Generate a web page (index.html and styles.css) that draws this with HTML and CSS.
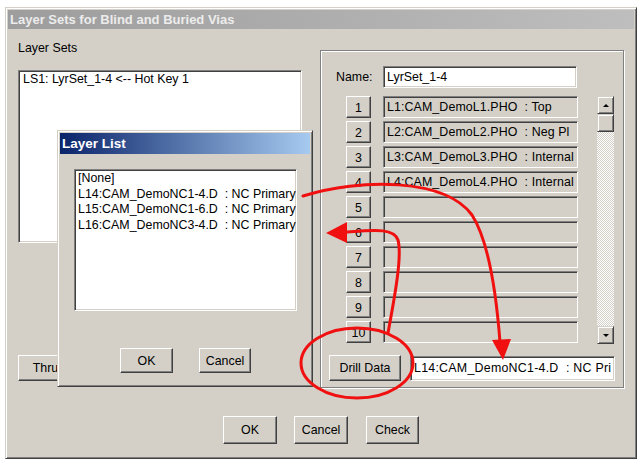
FILE: index.html
```html
<!DOCTYPE html>
<html lang="en">
<head>
    <meta charset="UTF-8">
    <title>Layer Sets for Blind and Buried Vias</title>
    <link rel="stylesheet" href="styles.css">
</head>
<body>
    <div class="window">
        <div class="titlebar">Layer Sets for Blind and Buried Vias</div>
        <div class="main">
            <div class="left-col">
                <div class="label">Layer Sets</div>
                <div class="listbox sets-list">
                    <div class="item">LS1: LyrSet_1-4 &lt;-- Hot Key 1</div>
                </div>
                <button class="btn thru-btn">Thru Holes</button>
            </div>
            <div class="groupbox">
                <div class="name-row">
                    <span class="name-label">Name:</span>
                    <div class="field white name-field">LyrSet_1-4</div>
                </div>
                <div class="layers">
                    <div class="rows">
                        <div class="row"><button class="btn num-btn">1</button><div class="field">L1:CAM_DemoL1.PHO  : Top</div></div>
                        <div class="row"><button class="btn num-btn">2</button><div class="field">L2:CAM_DemoL2.PHO  : Neg Pl</div></div>
                        <div class="row"><button class="btn num-btn">3</button><div class="field">L3:CAM_DemoL3.PHO  : Internal</div></div>
                        <div class="row"><button class="btn num-btn">4</button><div class="field">L4:CAM_DemoL4.PHO  : Internal</div></div>
                        <div class="row"><button class="btn num-btn">5</button><div class="field"></div></div>
                        <div class="row"><button class="btn num-btn">6</button><div class="field"></div></div>
                        <div class="row"><button class="btn num-btn">7</button><div class="field"></div></div>
                        <div class="row"><button class="btn num-btn">8</button><div class="field"></div></div>
                        <div class="row"><button class="btn num-btn">9</button><div class="field"></div></div>
                        <div class="row"><button class="btn num-btn">10</button><div class="field"></div></div>
                    </div>
                    <div class="scrollbar">
                        <div class="sb-btn"><span class="arrow up"></span></div>
                        <div class="sb-thumb"></div>
                        <div class="sb-track"></div>
                        <div class="sb-btn"><span class="arrow down"></span></div>
                    </div>
                </div>
                <div class="drill-row">
                    <button class="btn drill-btn">Drill Data</button>
                    <div class="field white drill-field">L14:CAM_DemoNC1-4.D  : NC Pri</div>
                </div>
            </div>
        </div>
        <div class="footer">
            <button class="btn ok-btn">OK</button>
            <button class="btn cancel-btn">Cancel</button>
            <button class="btn check-btn">Check</button>
        </div>
    </div>

    <!-- popup picker -->
    <div class="dialog">
        <div class="dlg-title">Layer List</div>
        <div class="listbox dlg-list">
            <div class="item">[None]</div>
            <div class="item">L14:CAM_DemoNC1-4.D  : NC Primary</div>
            <div class="item">L15:CAM_DemoNC1-6.D  : NC Primary</div>
            <div class="item">L16:CAM_DemoNC3-4.D  : NC Primary</div>
        </div>
        <div class="dlg-buttons">
            <button class="btn dlg-ok">OK</button>
            <button class="btn dlg-cancel">Cancel</button>
        </div>
    </div>

    <!-- red markup drawn over the screenshot -->
    <svg class="annotations" width="640" height="464" viewBox="0 0 640 464">
        <g fill="none" stroke="#f01010" stroke-width="3" stroke-linecap="round">
            <path d="M303 196 C360 178 445 178 472 215 C488 240 496 290 500 342"/>
            <path d="M388 333 C396 290 402 255 398 240 C394 228 375 230 346 232"/>
            <ellipse cx="357" cy="363" rx="56" ry="35"/>
        </g>
        <g fill="#f01010">
            <polygon points="492,340 511,339 503,360"/>
            <polygon points="347,222 347,243 326,233"/>
        </g>
    </svg>
</body>
</html>
```

FILE: styles.css
```css
body {
    margin: 0;
    position: relative;
    width: 640px;
    height: 464px;
    overflow: hidden;
    background: #fff;
    font-family: "Liberation Sans", Arial, sans-serif;
    font-size: 12.4px;
    color: #000;
}
.window {
    margin: 7px 0 0 5px;
    width: 632px;
    height: 452px;
    box-sizing: border-box;
    padding: 2px;
    background: #d4d0c8;
    border: 1px solid;
    border-color: #d4d0c8 #404040 #404040 #d4d0c8;
    box-shadow: inset 1px 1px 0 #fff, inset -1px -1px 0 #808080;
    display: flex;
    flex-direction: column;
}
.titlebar {
    height: 19px;
    line-height: 19px;
    padding-left: 2px;
    background: linear-gradient(to right, #9d9d9d, #bebebe);
    color: #ececec;
    font-weight: bold;
    font-size: 13px;
}
.main {
    display: flex;
    padding-left: 10px;
}
.left-col {
    width: 284px;
    padding-top: 12px;
    display: flex;
    flex-direction: column;
    align-items: flex-start;
}
.label {
    line-height: 15px;
}
.listbox {
    box-sizing: border-box;
    background: #fff;
    border: 1px solid;
    border-color: #808080 #fff #fff #808080;
    box-shadow: inset 1px 1px 0 #404040, inset -1px -1px 0 #d4d0c8;
    overflow: hidden;
}
.listbox .item {
    white-space: pre;
}
.sets-list {
    width: 284px;
    height: 173px;
    margin-top: 14px;
    padding: 1px 0 0 4px;
    line-height: 15px;
}
.btn {
    box-sizing: border-box;
    padding: 0;
    font: inherit;
    color: #000;
    background: #d4d0c8;
    border: 1px solid;
    border-color: #fff #404040 #404040 #fff;
    box-shadow: inset -1px -1px 0 #808080;
}
.thru-btn {
    margin-top: 112px;
    width: 90px;
    height: 26px;
}
.groupbox {
    box-sizing: border-box;
    width: 304px;
    height: 338px;
    margin: 21px 0 0 18px;
    border: 1px solid #808080;
    box-shadow: inset 1px 1px 0 #fff, 1px 1px 0 #fff;
}
.name-row {
    display: flex;
    align-items: center;
    height: 22px;
    margin-top: 15px;
    padding-left: 15px;
}
.name-label {
    width: 47px;
}
.field {
    box-sizing: border-box;
    height: 22px;
    padding-left: 3px;
    background: #d4d0c8;
    border: 1px solid;
    border-color: #808080 #fff #fff #808080;
    box-shadow: inset 1px 1px 0 #404040, inset -1px -1px 0 #d4d0c8;
    white-space: pre;
    overflow: hidden;
    display: flex;
    align-items: center;
}
.white {
    background: #fff;
}
.name-field {
    width: 194px;
}
.layers {
    display: flex;
    margin-top: 8px;
    padding-left: 25px;
}
.rows {
    display: flex;
    flex-direction: column;
    gap: 3px;
}
.row {
    display: flex;
    gap: 12px;
}
.num-btn {
    width: 25px;
    height: 22px;
    padding-top: 2px;
}
.row .field {
    width: 195px;
    letter-spacing: 0.1px;
}
.scrollbar {
    width: 17px;
    height: 248px;
    margin-left: 19px;
    display: flex;
    flex-direction: column;
}
.sb-btn, .sb-thumb {
    box-sizing: border-box;
    height: 18px;
    background: #d4d0c8;
    border: 1px solid;
    border-color: #d4d0c8 #404040 #404040 #d4d0c8;
    box-shadow: inset 1px 1px 0 #fff, inset -1px -1px 0 #808080;
}
.sb-btn {
    display: flex;
    align-items: center;
    justify-content: center;
}
.sb-track {
    flex: 1;
    background: repeating-conic-gradient(#d4d0c8 0 25%, #fff 0 50%) 0 0 / 2px 2px;
}
.arrow {
    width: 0;
    height: 0;
    border-left: 3px solid transparent;
    border-right: 3px solid transparent;
}
.arrow.up {
    border-bottom: 3px solid #000;
}
.arrow.down {
    border-top: 3px solid #000;
}
.drill-row {
    display: flex;
    align-items: center;
    gap: 9px;
    margin-top: 11px;
    padding-left: 8px;
}
.drill-btn {
    width: 72px;
    height: 26px;
}
.drill-field {
    width: 205px;
    height: 25px;
    letter-spacing: 0.25px;
}
.footer {
    display: flex;
    justify-content: center;
    gap: 17px;
    margin-top: 28px;
}
.footer .btn {
    width: 54px;
    height: 28px;
}
.footer .check-btn {
    width: 53px;
    margin-left: 1px;
}
.dialog {
    position: absolute;
    left: 57px;
    top: 130px;
    width: 256px;
    height: 257px;
    box-sizing: border-box;
    padding: 2px;
    background: #d4d0c8;
    border: 1px solid;
    border-color: #d4d0c8 #404040 #404040 #d4d0c8;
    box-shadow: inset 1px 1px 0 #fff, inset -1px -1px 0 #808080;
}
.dlg-title {
    height: 21px;
    line-height: 21px;
    padding-left: 2px;
    background: linear-gradient(to right, #0a246a, #a6caf0);
    color: #fff;
    font-weight: bold;
    font-size: 13.5px;
}
.dlg-list {
    width: 223px;
    height: 142px;
    margin: 15px 0 0 14px;
    padding: 1px 0 0 3px;
    line-height: 15.5px;
}
.dlg-buttons {
    display: flex;
    gap: 26px;
    margin-top: 37px;
    padding-left: 60px;
}
.dlg-buttons .btn {
    width: 53px;
    height: 25px;
}
.dlg-buttons .dlg-cancel {
    width: 52px;
}
.annotations {
    position: absolute;
    left: 0;
    top: 0;
    pointer-events: none;
}
```
